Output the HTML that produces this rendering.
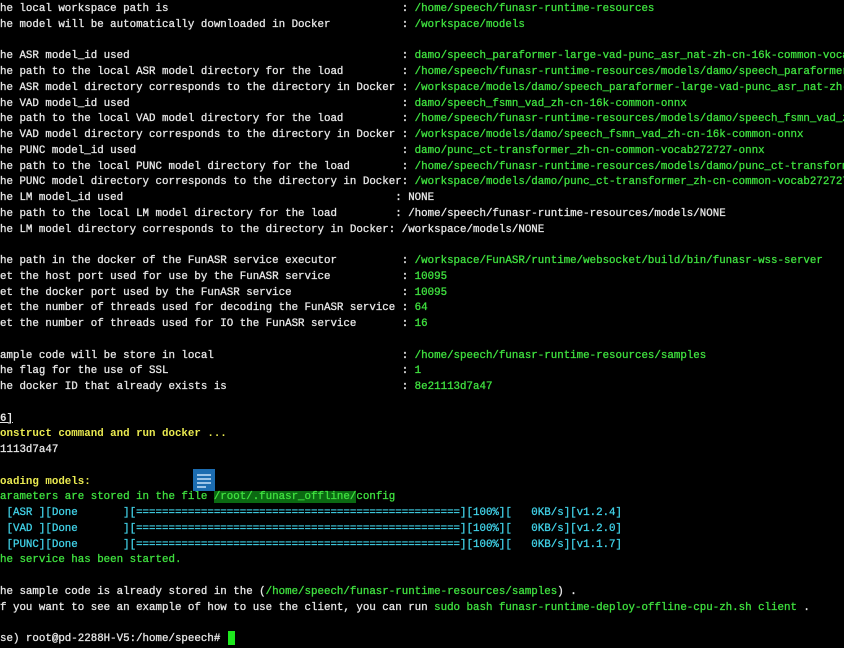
<!DOCTYPE html>
<html><head><meta charset="utf-8"><style>
html,body{margin:0;padding:0;background:#000;width:844px;height:648px;overflow:hidden}
pre{margin:0;position:absolute;left:0;top:2px;font-family:"Liberation Mono",monospace;font-size:10.8px;line-height:15.75px;color:#e6e6e6;white-space:pre;font-weight:normal;letter-spacing:0;-webkit-text-stroke:0.3px currentColor}
.g{color:#3fe03f}.y{color:#eaea50;font-weight:bold;-webkit-text-stroke:0}.c{color:#40d0e6}.hl{background:#0b6a12;color:#3fe03f}.u{text-decoration:underline;font-weight:bold;-webkit-text-stroke:0}
#ic{position:absolute;left:193px;top:469px;width:22px;height:22px;background:#1c6cb0}
#ic i{position:absolute;left:4px;width:14px;height:2px;background:#9cc4e8}
#cur{position:absolute;left:228px;top:631px;width:7px;height:14px;background:#1ee81e}
</style></head><body>
<pre>he local workspace path is                                    : <span class="g">/home/speech/funasr-runtime-resources</span>
he model will be automatically downloaded in Docker           : <span class="g">/workspace/models</span>

he ASR model_id used                                          : <span class="g">damo/speech_paraformer-large-vad-punc_asr_nat-zh-cn-16k-common-vocab8404-onnx</span>
he path to the local ASR model directory for the load         : <span class="g">/home/speech/funasr-runtime-resources/models/damo/speech_paraformer-large</span>
he ASR model directory corresponds to the directory in Docker : <span class="g">/workspace/models/damo/speech_paraformer-large-vad-punc_asr_nat-zh-cn</span>
he VAD model_id used                                          : <span class="g">damo/speech_fsmn_vad_zh-cn-16k-common-onnx</span>
he path to the local VAD model directory for the load         : <span class="g">/home/speech/funasr-runtime-resources/models/damo/speech_fsmn_vad_zh</span>
he VAD model directory corresponds to the directory in Docker : <span class="g">/workspace/models/damo/speech_fsmn_vad_zh-cn-16k-common-onnx</span>
he PUNC model_id used                                         : <span class="g">damo/punc_ct-transformer_zh-cn-common-vocab272727-onnx</span>
he path to the local PUNC model directory for the load        : <span class="g">/home/speech/funasr-runtime-resources/models/damo/punc_ct-transformer</span>
he PUNC model directory corresponds to the directory in Docker: <span class="g">/workspace/models/damo/punc_ct-transformer_zh-cn-common-vocab272727</span>
he LM model_id used                                          : NONE
he path to the local LM model directory for the load         : /home/speech/funasr-runtime-resources/models/NONE
he LM model directory corresponds to the directory in Docker: /workspace/models/NONE

he path in the docker of the FunASR service executor          : <span class="g">/workspace/FunASR/runtime/websocket/build/bin/funasr-wss-server</span>
et the host port used for use by the FunASR service           : <span class="g">10095</span>
et the docker port used by the FunASR service                 : <span class="g">10095</span>
et the number of threads used for decoding the FunASR service : <span class="g">64</span>
et the number of threads used for IO the FunASR service       : <span class="g">16</span>

ample code will be store in local                             : <span class="g">/home/speech/funasr-runtime-resources/samples</span>
he flag for the use of SSL                                    : <span class="g">1</span>
he docker ID that already exists is                           : <span class="g">8e21113d7a47</span>

<span class="u">6]</span>
<span class="y">onstruct command and run docker ...</span>
1113d7a47

<span class="y">oading models:</span>
<span class="g">arameters are stored in the file </span><span class="hl">/root/.funasr_offline/</span><span class="g">config</span>
<span class="c"> [ASR ][Done       ][==================================================][100%][   0KB/s][v1.2.4]</span>
<span class="c"> [VAD ][Done       ][==================================================][100%][   0KB/s][v1.2.0]</span>
<span class="c"> [PUNC][Done       ][==================================================][100%][   0KB/s][v1.1.7]</span>
<span class="g">he service has been started.</span>

he sample code is already stored in the (<span class="g">/home/speech/funasr-runtime-resources/samples</span>) .
f you want to see an example of how to use the client, you can run <span class="g">sudo bash funasr-runtime-deploy-offline-cpu-zh.sh client</span> .

se) root@pd-2288H-V5:/home/speech# </pre>
<div id="ic"><i style="top:5px"></i><i style="top:9px"></i><i style="top:13px"></i><i style="top:17px;width:9px"></i></div>
<div id="cur"></div>
</body></html>
